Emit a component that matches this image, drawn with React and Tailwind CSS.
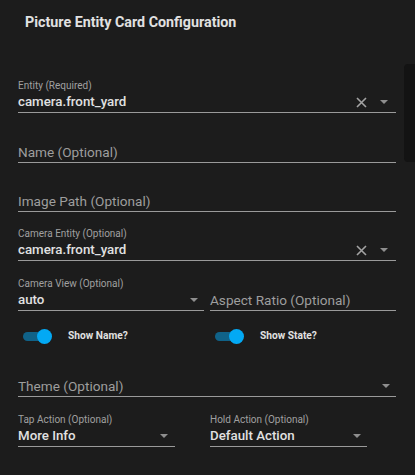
import React from "react";

const XIcon = () => (
  <svg width="11" height="11" viewBox="0 0 11 11" className="shrink-0">
    <path d="M1 1L10 10M10 1L1 10" stroke="#a3a3a3" strokeWidth="1.6" />
  </svg>
);

const Tri = ({ cls = "" }) => (
  <svg width="8" height="4" viewBox="0 0 8 4" className={"shrink-0 " + cls}>
    <path d="M0 0H8L4 4Z" fill="#8e8e8e" />
  </svg>
);

const Label = ({ children }) => (
  <div className="h-[12px] text-[10px] leading-[12px] text-[#a0a0a0]">{children}</div>
);

const Toggle = ({ label }) => (
  <div className="flex items-center h-[24px]">
    <div className="relative w-[50px] h-[24px] shrink-0">
      <div className="absolute left-[5px] top-[7.5px] w-[27px] h-[9px] rounded-full bg-[#106288]" />
      <div className="absolute left-[18.5px] top-[4.5px] w-[15px] h-[15px] rounded-full bg-[#03a9f4]" />
    </div>
    <span className="text-[10.2px] font-bold text-[#e1e1e1]">{label}</span>
  </div>
);

export default function App() {
  return (
    <div
      className="relative w-[415px] h-[475px] bg-[#1c1c1c] overflow-hidden"
      style={{ fontFamily: "Roboto, 'Liberation Sans', sans-serif" }}
    >
      <div className="absolute right-0 top-[64px] w-[11px] h-[98px] bg-[#131313] rounded-l-[4px]" />
      <div className="h-[80px] pt-[12px] pl-[25px]">
        <div className="text-[14.3px] leading-[20px] font-bold text-[#e1e1e1]">
          Picture Entity Card Configuration
        </div>
      </div>
      <div className="pl-[18px] pr-[19px] flex flex-col">
        {/* Entity */}
        <div className="border-b border-[#9a9a9a]">
          <Label>Entity (Required)</Label>
          <div className="h-[20px] flex items-center">
            <span className="flex-1 text-[13.3px] leading-[20px] font-medium text-[#e1e1e1]">
              camera.front_yard
            </span>
            <XIcon />
            <Tri cls="ml-[13px] mr-[8px]" />
          </div>
        </div>
        {/* Name */}
        <div className="mt-[29px] border-b border-[#9a9a9a] h-[21px]">
          <div className="h-[20px] text-[13.6px] leading-[20px] text-[#9e9e9e]">Name (Optional)</div>
        </div>
        {/* Image Path */}
        <div className="mt-[28px] border-b border-[#9a9a9a] h-[21px]">
          <div className="h-[20px] text-[13.6px] leading-[20px] text-[#9e9e9e]">Image Path (Optional)</div>
        </div>
        {/* Camera Entity */}
        <div className="mt-[16px] border-b border-[#9a9a9a]">
          <Label>Camera Entity (Optional)</Label>
          <div className="h-[20px] flex items-center">
            <span className="flex-1 text-[13.3px] leading-[20px] font-medium text-[#e1e1e1]">
              camera.front_yard
            </span>
            <XIcon />
            <Tri cls="ml-[13px] mr-[8px]" />
          </div>
        </div>
        {/* Camera view / Aspect */}
        <div className="mt-[17px] grid grid-cols-2 gap-x-[6px]">
          <div className="border-b border-[#9a9a9a]">
            <Label>Camera View (Optional)</Label>
            <div className="h-[20px] flex items-center">
              <span className="flex-1 text-[13.3px] leading-[20px] font-medium text-[#e1e1e1]">auto</span>
              <Tri cls="mr-[6px]" />
            </div>
          </div>
          <div className="flex flex-col justify-end">
            <div className="border-b border-[#9a9a9a]">
              <div className="h-[20px] text-[13.6px] leading-[20px] text-[#9e9e9e]">Aspect Ratio (Optional)</div>
            </div>
          </div>
        </div>
        {/* Toggles */}
        <div className="mt-[13px] grid grid-cols-2 gap-x-[6px]">
          <Toggle label="Show Name?" />
          <Toggle label="Show State?" />
        </div>
        {/* Theme */}
        <div className="mt-[28px] border-b border-[#9a9a9a]">
          <div className="h-[20px] flex items-center">
            <span className="flex-1 text-[13.6px] leading-[20px] text-[#9e9e9e]">Theme (Optional)</span>
            <Tri cls="mr-[6px]" />
          </div>
        </div>
        {/* Tap / Hold */}
        <div className="mt-[17px] grid grid-cols-2 gap-x-[6px]">
          <div className="w-[157px] border-b border-[#9a9a9a]">
            <Label>Tap Action (Optional)</Label>
            <div className="h-[20px] flex items-center">
              <span className="flex-1 text-[13.3px] leading-[20px] font-medium text-[#e1e1e1]">More Info</span>
              <Tri cls="mr-[7px]" />
            </div>
          </div>
          <div className="w-[157px] border-b border-[#9a9a9a]">
            <Label>Hold Action (Optional)</Label>
            <div className="h-[20px] flex items-center">
              <span className="flex-1 text-[13.3px] leading-[20px] font-medium text-[#e1e1e1]">Default Action</span>
              <Tri cls="mr-[6px]" />
            </div>
          </div>
        </div>
      </div>
    </div>
  );
}
